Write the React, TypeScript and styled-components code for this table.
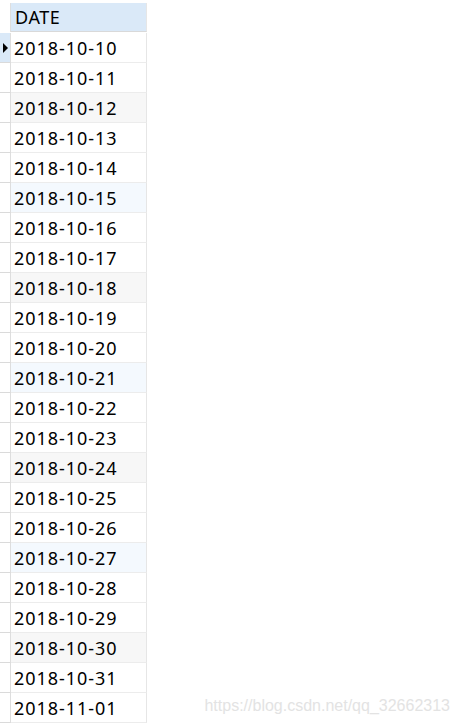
import React from "react";
import styled, { createGlobalStyle } from "styled-components";

const Global = createGlobalStyle`
  html, body { margin: 0; padding: 0; background: #ffffff; }
  body { width: 460px; height: 725px; overflow: hidden; position: relative; }
`;

const Page = styled.div`
  position: relative;
  width: 460px;
  height: 725px;
  padding-top: 3px;
  box-sizing: border-box;
  font-family: "Noto Sans", "Open Sans", sans-serif;
`;

const Table = styled.div`
  display: grid;
  grid-template-columns: 11px 136px;
  grid-auto-rows: 30px;
  width: 147px;
`;

const HeadStub = styled.div`
  height: 29px;
  background: #ffffff;
  border-right: 1px solid #dedede;
`;

const HeadCell = styled.div`
  height: 29px;
  background: #dae9f8;
  border-right: 1px solid #e6e6e6;
  border-bottom: 1px solid #d9d9d9;
  box-sizing: border-box;
  display: flex;
  align-items: center;
  padding-left: 4px;
  font-size: 18px;
  letter-spacing: 0.6px;
  color: #000;
`;

const Indicator = styled.div<{ $active?: boolean }>`
  box-sizing: border-box;
  background: ${(p) => (p.$active ? "#dae9f8" : "#ffffff")};
  border-right: 1px solid #dedede;
  border-bottom: 1px solid #dadada;
  display: flex;
  align-items: center;
  padding-left: 3px;
`;

const Arrow = styled.span`
  width: 0;
  height: 0;
  border-top: 5px solid transparent;
  border-bottom: 5px solid transparent;
  border-left: 5px solid #000;
`;

const Cell = styled.div<{ $tone: "none" | "gray" | "blue" }>`
  box-sizing: border-box;
  background: ${(p) =>
    p.$tone === "gray" ? "#f7f7f7" : p.$tone === "blue" ? "#f4f9fe" : "#ffffff"};
  border-right: 1px solid #e6e6e6;
  border-bottom: 1px solid #ececec;
  display: flex;
  align-items: center;
  padding-left: 3px;
  padding-top: 1px;
  font-size: 18px;
  color: #000;
  letter-spacing: 0.95px;
`;

const Watermark = styled.div`
  position: absolute;
  right: 10px;
  bottom: 10px;
  font-family: "Liberation Sans", Arial, sans-serif;
  font-size: 16px;
  color: #e3e3e3;
`;

function buildDates(): string[] {
  const out: string[] = [];
  for (let d = 10; d <= 31; d++) out.push(`2018-10-${d}`);
  out.push("2018-11-01");
  return out;
}

export default function App() {
  const dates = buildDates();
  return (
    <Page>
      <Global />
      <Table>
        <HeadStub />
        <HeadCell>DATE</HeadCell>
        {dates.map((d, i) => {
          const tone: "none" | "gray" | "blue" =
            i % 3 === 2 ? (Math.floor(i / 3) % 2 === 0 ? "gray" : "blue") : "none";
          return (
            <React.Fragment key={d}>
              <Indicator $active={i === 0}>{i === 0 && <Arrow />}</Indicator>
              <Cell $tone={tone}>{d}</Cell>
            </React.Fragment>
          );
        })}
      </Table>
      <Watermark>https://blog.csdn.net/qq_32662313</Watermark>
    </Page>
  );
}
